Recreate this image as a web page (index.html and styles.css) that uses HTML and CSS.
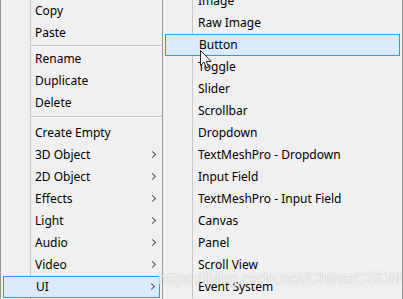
FILE: index.html
```html
<!DOCTYPE html>
<html lang="en">
<head>
    <meta charset="UTF-8">
    <title>GameObject menu</title>
    <link rel="stylesheet" href="styles.css">
</head>
<body>

    <div class="menus">
        <ul class="menu main-menu">
            <li class="item">Copy</li>
            <li class="item">Paste</li>
            <li class="sep"></li>
            <li class="item">Rename</li>
            <li class="item">Duplicate</li>
            <li class="item">Delete</li>
            <li class="sep wide"></li>
            <li class="item">Create Empty</li>
            <li class="item sub">3D Object</li>
            <li class="item sub">2D Object</li>
            <li class="item sub">Effects</li>
            <li class="item sub">Light</li>
            <li class="item sub">Audio</li>
            <li class="item sub">Video</li>
            <li class="item sub active">UI</li>
        </ul>

        <ul class="menu sub-menu">
            <li class="item">Image</li>
            <li class="item">Raw Image</li>
            <li class="item active">Button</li>
            <li class="item">Toggle</li>
            <li class="item">Slider</li>
            <li class="item">Scrollbar</li>
            <li class="item">Dropdown</li>
            <li class="item">TextMeshPro - Dropdown</li>
            <li class="item">Input Field</li>
            <li class="item">TextMeshPro - Input Field</li>
            <li class="item">Canvas</li>
            <li class="item">Panel</li>
            <li class="item">Scroll View</li>
            <li class="item">Event System</li>
        </ul>
    </div>

    <svg class="cursor" width="12" height="19" viewBox="0 0 12 19">
        <path d="M0.5 0.5 L0.5 15.5 L4 12.2 L6.5 18 L8.6 17.1 L6.2 11.4 L11 11.4 Z" fill="#fff" stroke="#222" stroke-width="1" stroke-linejoin="round"/>
    </svg>

    <div class="watermark">https://blog.csdn.net/ChinarCSDN</div>

</body>
</html>
```

FILE: styles.css
```css
body {
    margin: 0;
    width: 403px;
    height: 299px;
    overflow: hidden;
    position: relative;
    background-color: #f0f0f0;
    font-family: "Noto Sans", sans-serif;
    font-size: 12px;
    color: #000;
}
.menus {
    display: flex;
    align-items: flex-start;
    height: 299px;
    overflow: hidden;
}
.menu {
    list-style: none;
    margin: 0;
    padding: 0;
    background-color: #f0f0f0;
    border-left: 1px solid #979797;
    border-right: 1px solid #979797;
    background-image: linear-gradient(#c8c8c8, #c8c8c8);
    background-size: 1px 100%;
    background-position: 29px 0;
    background-repeat: no-repeat;
}
.main-menu {
    width: 161px;
    height: 299px;
}
.sub-menu {
    width: 239px;
    height: 309px;
    margin-left: -1px;
    margin-top: -10px;
}
.item {
    position: relative;
    height: 22px;
    line-height: 22px;
    padding-left: 34px;
    white-space: nowrap;
}
.sub-menu .item {
    padding-left: 35px;
}
.item.active {
    margin: 0 2px;
    padding-left: 32px;
    border: 1px solid #3399e6;
    background-color: #dbeafc;
    height: 20px;
    line-height: 20px;
}
.sub-menu .item.active {
    padding-left: 33px;
}
.item.sub::after {
    content: "";
    position: absolute;
    right: 7px;
    top: 8px;
    width: 4px;
    height: 4px;
    border-top: 1px solid #555;
    border-right: 1px solid #555;
    transform: rotate(45deg);
}
.item.sub.active::after {
    right: 5px;
    top: 7px;
}
.sep {
    height: 4px;
    padding-top: 1px;
    box-sizing: border-box;
    margin-left: 30px;
}
.sep::before {
    content: "";
    display: block;
    height: 1px;
    background-color: #c4c4c4;
    border-bottom: 1px solid #fbfbfb;
}
.sep.wide {
    height: 8px;
    padding-top: 2px;
}
.cursor {
    position: absolute;
    left: 200px;
    top: 50px;
}
.watermark {
    position: absolute;
    left: 158px;
    top: 270px;
    font-family: "Liberation Sans", Arial, sans-serif;
    font-size: 16px;
    letter-spacing: 0.1px;
    color: rgba(255, 255, 255, 0.9);
    text-shadow: 0 0 1px rgba(110, 110, 110, 0.6);
    white-space: nowrap;
}
```
